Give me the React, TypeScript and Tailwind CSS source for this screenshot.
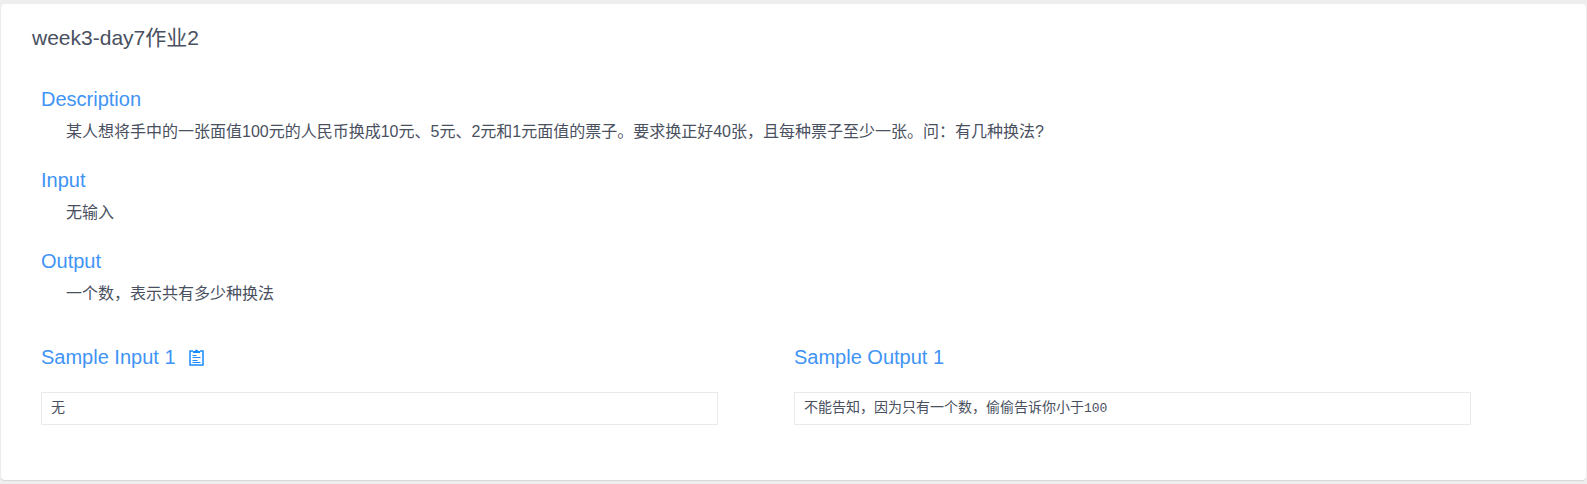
import React from "react";

const sans = "font-['Liberation_Sans','Noto_Sans_CJK_SC',sans-serif]";

function Section({ title, children }: { title: string; children: React.ReactNode }) {
  return (
    <div className="mb-[21px]">
      <p className="text-[20px] leading-[30px] text-[#3f94f5]">{title}</p>
      <p className="ml-[25px] mt-[6px] text-[16px] leading-[24px] text-[#495060]">{children}</p>
    </div>
  );
}

function Sample({ title, children, icon }: { title: string; children: React.ReactNode; icon?: boolean }) {
  return (
    <div className="w-[677px]">
      <div className="flex h-[30px] items-center text-[20px] text-[#3f94f5]">
        {title}
        {icon && (
          <svg className="ml-[13px]" width="15" height="18" viewBox="0 0 15 18" fill="none">
            <path d="M4 3H1v14h13V3h-3" stroke="#1a8cff" strokeWidth="1.500" />
            <path d="M4 5V3h2a1.500 1.500 0 0 1 3 0h2v2z" fill="#1a8cff" />
            <path d="M3.500 7.500h4M3.500 9.500h8M3.500 12.500h5M3.500 14.500h8" stroke="#1a8cff" />
          </svg>
        )}
      </div>
      <pre className="mt-[20px] h-[33px] border border-[#e9eaec] px-[9px] pt-[5px] text-[14px] leading-[20px] text-[#495060] font-['Liberation_Mono','Noto_Sans_CJK_SC',monospace]">
        {children}
      </pre>
    </div>
  );
}

export default function App() {
  return (
    <div className={`h-[484px] bg-[#eeeeee] px-[1px] pt-[4px] ${sans}`}>
      <div className="h-[476px] rounded-[4px] bg-white shadow-[0_1px_1px_0_rgba(0,0,0,0.1)]">
        <div className="px-[31px] pt-[16px] text-[21px] leading-[36px] text-[#495060]">week3-day7作业2</div>
        <div className="px-[40px] pt-[28px]">
          <Section title="Description">
            某人想将手中的一张面值100元的人民币换成10元、5元、2元和1元面值的票子。要求换正好40张，且每种票子至少一张。问：有几种换法?
          </Section>
          <Section title="Input">无输入</Section>
          <Section title="Output">一个数，表示共有多少种换法</Section>
          <div className="mt-[36px] flex gap-[76px]">
            <Sample title="Sample Input 1" icon>无</Sample>
            <Sample title="Sample Output 1">
              不能告知，因为只有一个数，偷偷告诉你小于<span className="text-[13px]">100</span>
            </Sample>
          </div>
        </div>
      </div>
    </div>
  );
}
